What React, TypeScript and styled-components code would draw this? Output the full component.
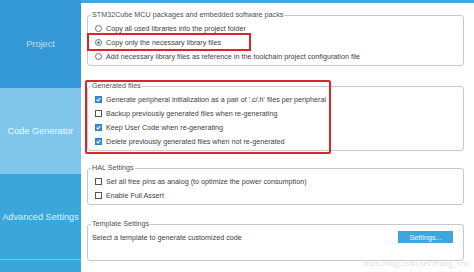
import React from 'react';
import styled, { createGlobalStyle } from 'styled-components';

const GlobalStyle = createGlobalStyle`
  html, body {
    margin: 0;
    padding: 0;
    background: #ffffff;
  }
  body {
    font-family: "Liberation Sans", Arial, sans-serif;
  }
`;

const Window = styled.div`
  display: flex;
  width: 474px;
  height: 272px;
  overflow: hidden;
  background: #ffffff;
`;

const SideBar = styled.div`
  display: flex;
  flex-direction: column;
  width: 81px;
  flex-shrink: 0;
`;

const Tab = styled.div<{ $bg: string; $h: number; $fg: string }>`
  display: flex;
  align-items: center;
  justify-content: center;
  height: ${(p) => p.$h}px;
  flex-shrink: 0;
  background: ${(p) => p.$bg};
  color: ${(p) => p.$fg};
  font-size: 9.2px;
  white-space: nowrap;
`;

const TabRest = styled.div`
  flex: 1;
  background: #3ba6da;
  border-top: 1px solid #79c6ec;
`;

const Content = styled.div`
  position: relative;
  flex: 1;
  display: flex;
  flex-direction: column;
  border-top: 3px solid #45a6dc;
  padding: 8px 10px 0 6px;
  color: #3e3e3e;
  font-size: 7.2px;
`;

const Group = styled.fieldset<{ $gap?: number }>`
  position: relative;
  margin: ${(p) => p.$gap ?? 0}px 0 0 0;
  padding: 2px 0 2px 0;
  border: 1px solid #c9c9c9;
  border-radius: 3px;
  min-width: 0;
`;

const Legend = styled.legend`
  margin-left: 3px;
  padding: 0 1px;
  line-height: 8px;
  color: #505050;
  font-size: 7.2px;
`;

const Row = styled.div<{ $mark?: boolean }>`
  display: flex;
  align-items: center;
  gap: 4px;
  height: 14px;
  padding-left: 7px;
  white-space: nowrap;
  ${(p) => (p.$mark ? 'width: 154px; outline: 2px solid #d8262c; margin-left: 1px; padding-left: 6px;' : '')}
`;

const Radio = styled.span<{ $on?: boolean }>`
  position: relative;
  width: 7px;
  height: 7px;
  box-sizing: border-box;
  border: 1px solid #6f6f6f;
  border-radius: 50%;
  background: #fff;
  flex-shrink: 0;
  &::after {
    content: '';
    position: absolute;
    left: 1px;
    top: 1px;
    width: 3px;
    height: 3px;
    border-radius: 50%;
    background: ${(p) => (p.$on ? '#3d8fd6' : 'transparent')};
  }
`;

const Box = styled.span<{ $on?: boolean }>`
  display: flex;
  align-items: center;
  justify-content: center;
  width: 7px;
  height: 7px;
  box-sizing: border-box;
  border: 1px solid ${(p) => (p.$on ? '#2f7fd0' : '#555')};
  background: ${(p) => (p.$on ? '#3a8ee0' : '#fff')};
  flex-shrink: 0;
`;

const Highlight = styled.div`
  position: absolute;
  left: -3px;
  top: -10px;
  width: 242px;
  height: 70px;
  border: 2px solid #d8262c;
  border-radius: 2px;
  pointer-events: none;
`;

const TemplateRow = styled.div`
  display: flex;
  align-items: center;
  justify-content: space-between;
  height: 14px;
  padding: 0 10px 14px 4px;
`;

const SettingsButton = styled.div`
  display: flex;
  align-items: center;
  justify-content: center;
  width: 55px;
  height: 12px;
  background: #3ea6dd;
  color: #f2f9fd;
  font-size: 7.2px;
`;

const Watermark = styled.div`
  position: absolute;
  right: 5px;
  bottom: 4px;
  color: rgba(150, 150, 150, 0.35);
  font-size: 7.5px;
`;

const Check = ({ on }: { on?: boolean }) => (
  <Box $on={on}>
    {on && (
      <svg width="5" height="5" viewBox="0 0 5 5">
        <path d="M0.6 2.6 L2 3.9 L4.4 1" stroke="#fff" strokeWidth="1.1" fill="none" />
      </svg>
    )}
  </Box>
);

const App = () => {
  return (
    <Window>
      <GlobalStyle />
      <SideBar>
        <Tab $bg="#3398d5" $h={88} $fg="#bfe1f6">Project</Tab>
        <Tab $bg="#80c6ea" $h={86} $fg="#eef8fd">Code Generator</Tab>
        <Tab $bg="#3ba6da" $h={85} $fg="#dff1fb">Advanced Settings</Tab>
        <TabRest />
      </SideBar>
      <Content>
        <Group>
          <Legend>STM32Cube MCU packages and embedded software packs</Legend>
          <Row><Radio />Copy all used libraries into the project folder</Row>
          <Row $mark><Radio $on />Copy only the necessary library files</Row>
          <Row><Radio />Add necessary library files as reference in the toolchain project configuration file</Row>
        </Group>
        <Group $gap={16}>
          <Legend>Generated files</Legend>
          <Row><Check on />Generate peripheral initialization as a pair of '.c/.h' files per peripheral</Row>
          <Row><Check />Backup previously generated files when re-generating</Row>
          <Row><Check on />Keep User Code when re-generating</Row>
          <Row><Check on />Delete previously generated files when not re-generated</Row>
          <Highlight />
        </Group>
        <Group $gap={13}>
          <Legend>HAL Settings</Legend>
          <Row><Check />Set all free pins as analog (to optimize the power consumption)</Row>
          <Row><Check />Enable Full Assert</Row>
        </Group>
        <Group $gap={15}>
          <Legend>Template Settings</Legend>
          <TemplateRow>
            <span>Select a template to generate customized code</span>
            <SettingsButton>Settings...</SettingsButton>
          </TemplateRow>
        </Group>
        <Watermark>https://blog.csdn.net/zhang_nnn</Watermark>
      </Content>
    </Window>
  );
};

export default App;
